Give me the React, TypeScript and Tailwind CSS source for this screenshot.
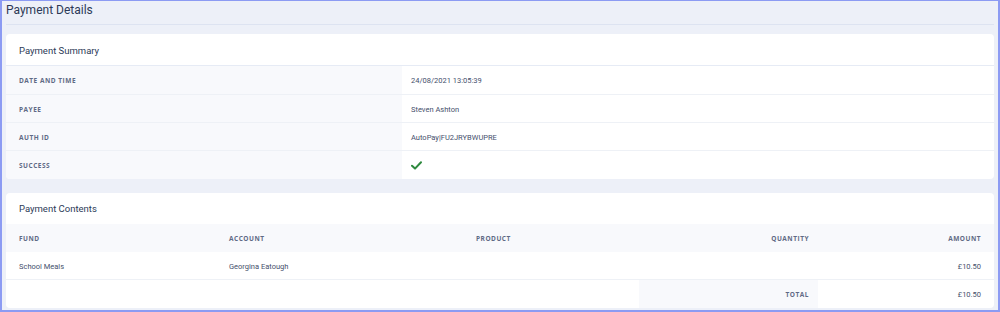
import React from 'react';

const summaryRows = [
  { label: 'Date and Time', value: '24/08/2021 13:05:39' },
  { label: 'Payee', value: 'Steven Ashton' },
  { label: 'Auth ID', value: 'AutoPay|FU2JRYBWUPRE' },
];

const labelCls = "font-['Open_Sans',sans-serif] text-[6.5px] font-bold uppercase tracking-[0.08em] text-[#5f6a85]";
const valueCls = "font-['Roboto',sans-serif] text-[7.5px] text-[#454f6c]";

const Check = () => (
  <svg width="11" height="9" viewBox="0 0 11 9" className="block">
    <path d="M1 4.8 L4 7.6 L10 1.3" fill="none" stroke="#2f8a3f" strokeWidth="2" strokeLinecap="round" strokeLinejoin="round" />
  </svg>
);

export default function App() {
  return (
    <div className="w-[1000px] h-[312px] bg-[#edf0f8] border-t border-x-2 border-b-2 border-[#8c9bf3] overflow-hidden">
      {/* Page title */}
      <div className="h-[23px] pl-[4px] pr-[2px] flex items-center">
        <h1 className="font-['Roboto',sans-serif] text-[12px] text-[#2c3a57] leading-none -mt-[6px]">Payment Details</h1>
      </div>
      <div className="mx-[4px] h-px bg-[#dde3f1]" />

      {/* Payment Summary */}
      <div className="mx-[4px] mt-[9px] bg-white rounded-[4px] overflow-hidden">
        <div className="h-[32px] flex items-center px-[13px] pt-[3px] border-b border-[#e6ebf5]">
          <h2 className="font-['Roboto',sans-serif] text-[9.5px] text-[#2c3a57]">Payment Summary</h2>
        </div>
        {summaryRows.map((r, i) => (
          <div key={r.label} className={`flex h-[28px] ${i > 0 ? 'border-t border-[#eef1f6]' : ''}`}>
            <div className="w-[396px] bg-[#f8f9fc] flex items-center px-[13px] pt-[2px]">
              <span className={labelCls}>{r.label}</span>
            </div>
            <div className="flex-1 flex items-center px-[9px] pt-[2px]">
              <span className={valueCls}>{r.value}</span>
            </div>
          </div>
        ))}
        <div className="flex h-[29px] border-t border-[#eef1f6]">
          <div className="w-[396px] bg-[#f8f9fc] flex items-center px-[13px] pt-[2px]">
            <span className={labelCls}>Success</span>
          </div>
          <div className="flex-1 flex items-center px-[9px] pt-[1px]">
            <Check />
          </div>
        </div>
      </div>

      {/* Payment Contents */}
      <div className="mx-[4px] mt-[14px] bg-white rounded-[4px] overflow-hidden">
        <div className="h-[31px] flex items-center px-[13px] pt-[2px]">
          <h2 className="font-['Roboto',sans-serif] text-[9.5px] text-[#2c3a57]">Payment Contents</h2>
        </div>
        <div className="grid grid-cols-[210px_247px_176px_179px_1fr] h-[28px] bg-[#f8f9fc] items-center pt-[2px]">
          <span className={`${labelCls} pl-[13px]`}>Fund</span>
          <span className={`${labelCls} pl-[13px]`}>Account</span>
          <span className={`${labelCls} pl-[13px]`}>Product</span>
          <span className={`${labelCls} text-right pr-[9px]`}>Quantity</span>
          <span className={`${labelCls} text-right pr-[13px]`}>Amount</span>
        </div>
        <div className="grid grid-cols-[210px_247px_176px_179px_1fr] h-[28px] items-center border-b border-[#eef1f6] pt-[2px]">
          <span className={`${valueCls} pl-[13px]`}>School Meals</span>
          <span className={`${valueCls} pl-[13px]`}>Georgina Eatough</span>
          <span />
          <span />
          <span className={`${valueCls} text-right pr-[13px]`}>£10.50</span>
        </div>
        <div className="grid grid-cols-[210px_247px_176px_179px_1fr] h-[28px]">
          <span />
          <span />
          <span />
          <div className="bg-[#f8f9fc] flex items-center justify-end pr-[9px] pt-[2px]">
            <span className={labelCls}>Total</span>
          </div>
          <div className="flex items-center justify-end pr-[13px] pt-[2px]">
            <span className={valueCls}>£10.50</span>
          </div>
        </div>
      </div>
    </div>
  );
}
